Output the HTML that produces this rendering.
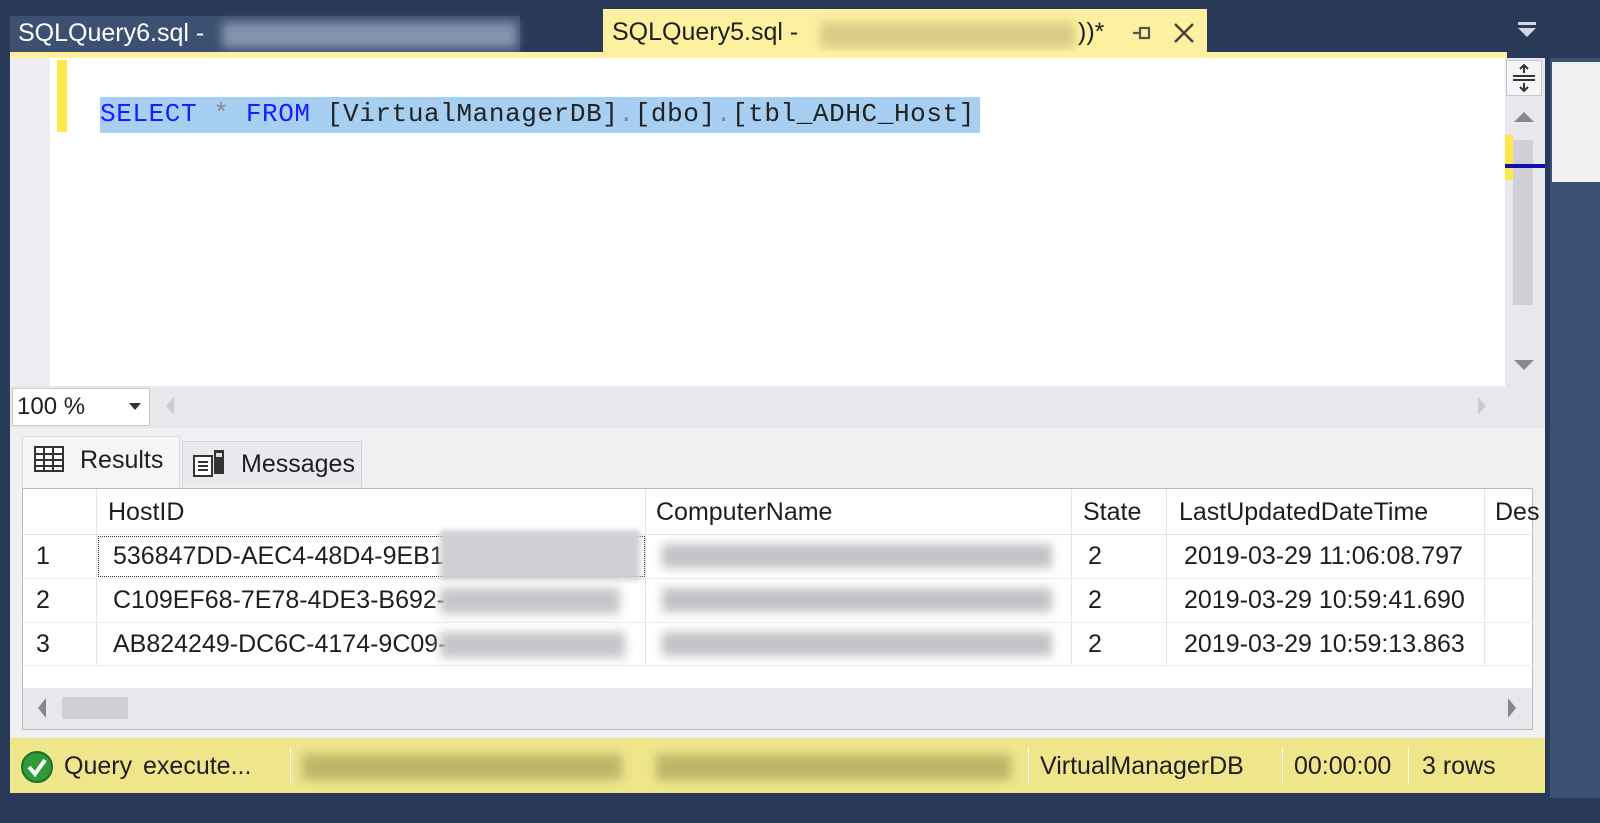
<!DOCTYPE html>
<html><head><style>
*{margin:0;padding:0;box-sizing:border-box}
body{width:1600px;height:823px;background:#293a58;position:relative;overflow:hidden;font-family:"Liberation Sans Narrow","Liberation Sans",sans-serif;color:#1e1e1e}
.a{position:absolute}
.blur{filter:blur(5px);position:absolute}
.mono{font-family:"Liberation Mono","DejaVu Sans Mono",monospace}
.cell{position:absolute;font-size:25px;white-space:nowrap}
</style></head><body>
<div class="a" style="left:10px;top:16px;width:510px;height:36px;background:#3c5072"></div>
<div class="a" style="left:18px;top:19px;font-size:25px;color:#fff">SQLQuery6.sql -</div>
<div class="blur" style="left:222px;top:22px;width:295px;height:26px;background:#8593ad"></div>
<div class="a" style="left:603px;top:9px;width:604px;height:44px;background:#fdf1a0"></div>
<div class="a" style="left:612px;top:18px;font-size:25px;color:#1e1e1e">SQLQuery5.sql -</div>
<div class="blur" style="left:820px;top:22px;width:255px;height:26px;background:#d8cc86"></div>
<div class="a" style="left:1078px;top:18px;font-size:25px">))*</div>
<svg class="a" style="left:1130px;top:22px" width="24" height="22"><path d="M3 11H10M10 5V17M10 6H19V16H10" stroke="#555" stroke-width="2.2" fill="none"/></svg>
<svg class="a" style="left:1172px;top:21px" width="24" height="24"><path d="M3 3L21 21M21 3L3 21" stroke="#444" stroke-width="2.5"/></svg>
<svg class="a" style="left:1516px;top:20px" width="24" height="20"><rect x="2" y="2" width="18" height="3" fill="#cfd6e2"/><path d="M2 8H20L11 17Z" fill="#cfd6e2"/></svg>
<div class="a" style="left:10px;top:52px;width:1497px;height:6px;background:#fdf1a0"></div>
<div class="a" style="left:10px;top:58px;width:1495px;height:328px;background:#fff"></div>
<div class="a" style="left:10px;top:58px;width:40px;height:328px;background:#eeeef2"></div>
<div class="a" style="left:57px;top:60px;width:10px;height:72px;background:#ffe74a"></div>
<div class="a" style="left:100px;top:97px;width:880px;height:36px;background:#a6cff2"></div>
<div class="a mono" style="left:100px;top:99px;font-size:26px;letter-spacing:0.6px;white-space:pre;color:#222"><span style="color:#1b1bff">SELECT</span> <span style="color:#888">*</span> <span style="color:#1b1bff">FROM</span> [VirtualManagerDB]<span style="color:#888">.</span>[dbo]<span style="color:#888">.</span>[tbl_ADHC_Host]</div>
<div class="a" style="left:1505px;top:58px;width:40px;height:328px;background:#e8e8ec"></div>
<div class="a" style="left:1506px;top:60px;width:36px;height:36px;background:#f5f5f7;border:1px solid #c8c8d0"></div>
<svg class="a" style="left:1508px;top:62px" width="32" height="32"><path d="M5 14H27M5 18H27M16 3V11M16 21V29M12 7L16 3L20 7M12 25L16 29L20 25" stroke="#333" stroke-width="2" fill="none"/></svg>
<svg class="a" style="left:1512px;top:110px" width="24" height="14"><path d="M2 12L12 2L22 12Z" fill="#888"/></svg>
<div class="a" style="left:1513px;top:140px;width:20px;height:165px;background:#cfcfd6"></div>
<div class="a" style="left:1505px;top:135px;width:8px;height:45px;background:#ffe74a"></div>
<div class="a" style="left:1505px;top:164px;width:40px;height:4px;background:#1010b0"></div>
<svg class="a" style="left:1512px;top:358px" width="24" height="14"><path d="M2 2L12 12L22 2Z" fill="#888"/></svg>
<div class="a" style="left:1550px;top:58px;width:50px;height:740px;background:#3c5072"></div>
<div class="a" style="left:1552px;top:62px;width:48px;height:120px;background:#f0f0f2"></div>
<div class="a" style="left:10px;top:386px;width:1535px;height:42px;background:#e8e8ec"></div>
<div class="a" style="left:12px;top:388px;width:138px;height:38px;background:#fff;border:1px solid #ccc"></div>
<div class="a" style="left:17px;top:393px;font-size:24px">100 %</div>
<svg class="a" style="left:128px;top:402px" width="14" height="10"><path d="M1 1H13L7 8Z" fill="#333"/></svg>
<svg class="a" style="left:164px;top:396px" width="12" height="20"><path d="M10 1L2 10L10 19Z" fill="#ccc"/></svg>
<svg class="a" style="left:1476px;top:396px" width="12" height="20"><path d="M2 1L10 10L2 19Z" fill="#ccc"/></svg>
<div class="a" style="left:10px;top:428px;width:1535px;height:310px;background:#f0f0f2"></div>
<div class="a" style="left:22px;top:436px;width:158px;height:54px;background:#f5f5f7;border:1px solid #ddd;border-bottom:none"></div>
<svg class="a" style="left:34px;top:446px" width="30" height="26"><rect x="1" y="1" width="28" height="24" fill="#fff" stroke="#333" stroke-width="2"/><path d="M1 8H29M1 14H29M1 20H29M10 1V25M19 1V25" stroke="#333" stroke-width="2"/></svg>
<div class="a" style="left:80px;top:446px;font-size:25px">Results</div>
<div class="a" style="left:182px;top:441px;width:180px;height:46px;background:#e9e9ee;border:1px solid #d4d4da;border-bottom:none"></div>
<svg class="a" style="left:192px;top:448px" width="36" height="30"><rect x="2" y="8" width="18" height="20" fill="#fff" stroke="#333" stroke-width="2"/><path d="M6 14H16M6 18H16M6 22H16" stroke="#333" stroke-width="2"/><rect x="22" y="2" width="10" height="24" fill="#333"/><rect x="24" y="5" width="6" height="4" fill="#ddd"/></svg>
<div class="a" style="left:241px;top:450px;font-size:25px">Messages</div>
<div class="a" style="left:22px;top:488px;width:1511px;height:242px;background:#fff;border:1px solid #bbb"></div>
<div class="a" style="left:23px;top:534px;width:1510px;height:1px;background:#e4e4e4"></div>
<div class="a" style="left:23px;top:578px;width:1510px;height:1px;background:#ececec"></div>
<div class="a" style="left:23px;top:622px;width:1510px;height:1px;background:#ececec"></div>
<div class="a" style="left:23px;top:665px;width:1510px;height:1px;background:#ececec"></div>
<div class="a" style="left:96px;top:489px;width:1px;height:176px;background:#e4e4e4"></div>
<div class="a" style="left:645px;top:489px;width:1px;height:176px;background:#e4e4e4"></div>
<div class="a" style="left:1071px;top:489px;width:1px;height:176px;background:#e4e4e4"></div>
<div class="a" style="left:1166px;top:489px;width:1px;height:176px;background:#e4e4e4"></div>
<div class="a" style="left:1484px;top:489px;width:1px;height:176px;background:#e4e4e4"></div>
<div class="cell" style="left:108px;top:498px">HostID</div>
<div class="cell" style="left:656px;top:498px">ComputerName</div>
<div class="cell" style="left:1083px;top:498px">State</div>
<div class="cell" style="left:1179px;top:498px">LastUpdatedDateTime</div>
<div class="cell" style="left:1495px;top:498px">Des</div>
<div class="a" style="left:98px;top:536px;width:547px;height:41px;border:1px dotted #333"></div>
<div class="cell" style="left:36px;top:542px">1</div><div class="cell" style="left:113px;top:542px">536847DD-AEC4-48D4-9EB1</div>
<div class="cell" style="left:36px;top:586px">2</div><div class="cell" style="left:113px;top:586px">C109EF68-7E78-4DE3-B692-</div>
<div class="cell" style="left:36px;top:630px">3</div><div class="cell" style="left:113px;top:630px">AB824249-DC6C-4174-9C09-</div>
<div class="blur" style="left:440px;top:530px;width:200px;height:50px;background:#d0d0d4;filter:blur(3px)"></div>
<div class="blur" style="left:440px;top:588px;width:180px;height:26px;background:#c6c6ca"></div>
<div class="blur" style="left:440px;top:632px;width:185px;height:26px;background:#c6c6ca"></div>
<div class="blur" style="left:662px;top:544px;width:390px;height:24px;background:#c2c2c6"></div>
<div class="blur" style="left:662px;top:588px;width:390px;height:24px;background:#c2c2c6"></div>
<div class="blur" style="left:662px;top:632px;width:390px;height:24px;background:#c2c2c6"></div>
<div class="cell" style="left:1088px;top:542px">2</div><div class="cell" style="left:1184px;top:542px">2019-03-29 11:06:08.797</div>
<div class="cell" style="left:1088px;top:586px">2</div><div class="cell" style="left:1184px;top:586px">2019-03-29 10:59:41.690</div>
<div class="cell" style="left:1088px;top:630px">2</div><div class="cell" style="left:1184px;top:630px">2019-03-29 10:59:13.863</div>
<div class="a" style="left:23px;top:688px;width:1509px;height:41px;background:#e8e8ec"></div>
<div class="a" style="left:62px;top:697px;width:66px;height:22px;background:#cfcfd6"></div>
<svg class="a" style="left:36px;top:697px" width="12" height="22"><path d="M10 1L2 11L10 21Z" fill="#888"/></svg>
<svg class="a" style="left:1506px;top:697px" width="12" height="22"><path d="M2 1L10 11L2 21Z" fill="#888"/></svg>
<div class="a" style="left:10px;top:738px;width:1535px;height:55px;background:#efe68c"></div>
<svg class="a" style="left:20px;top:750px" width="34" height="34"><circle cx="17" cy="17" r="15" fill="#2e9a3a" stroke="#1f6f28" stroke-width="2"/><path d="M9 17L15 24L25 10" stroke="#fff" stroke-width="4" fill="none"/></svg>
<div class="a" style="left:64px;top:752px;font-size:25px;word-spacing:4px">Query execute...</div>
<div class="a" style="left:290px;top:748px;width:1px;height:36px;background:#fff"></div>
<div class="blur" style="left:302px;top:754px;width:320px;height:26px;background:#bfb56a"></div>
<div class="blur" style="left:656px;top:754px;width:355px;height:26px;background:#bfb56a"></div>
<div class="a" style="left:1028px;top:748px;width:1px;height:36px;background:#fff"></div>
<div class="a" style="left:1040px;top:752px;font-size:25px">VirtualManagerDB</div>
<div class="a" style="left:1282px;top:748px;width:1px;height:36px;background:#fff"></div>
<div class="a" style="left:1294px;top:752px;font-size:25px">00:00:00</div>
<div class="a" style="left:1408px;top:748px;width:1px;height:36px;background:#fff"></div>
<div class="a" style="left:1422px;top:752px;font-size:25px">3 rows</div>
</body></html>
